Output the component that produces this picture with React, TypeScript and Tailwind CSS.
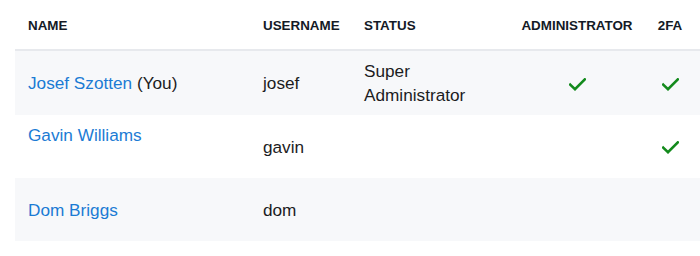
const users = [
  { name: 'Josef Szotten', you: true, username: 'josef', status: ['Super', 'Administrator'], admin: true, twoFactor: true },
  { name: 'Gavin Williams', you: false, username: 'gavin', status: [], admin: false, twoFactor: true, top: true },
  { name: 'Dom Briggs', you: false, username: 'dom', status: [], admin: false, twoFactor: false },
];

function Check() {
  return (
    <svg width="17" height="13" viewBox="0 0 17 13" className="inline-block align-middle">
      <path d="M1.2 6.6 L6 11.2 L15.8 1.4" fill="none" stroke="#138a1c" strokeWidth="2.6" strokeLinecap="square" />
    </svg>
  );
}

export default function App() {
  return (
    <div className="bg-white w-[700px] h-[256px] overflow-hidden pl-[15px]" style={{ fontFamily: '"Liberation Sans", Arial, Helvetica, sans-serif' }}>
      <table className="table-fixed border-collapse w-[685px] text-[17.2px] leading-[24px] text-[#1c1c1e]">
        <colgroup>
          <col className="w-[235px]" />
          <col className="w-[101px]" />
          <col className="w-[157px]" />
          <col className="w-[138px]" />
          <col className="w-[54px]" />
        </colgroup>
        <thead>
          <tr className="h-[50px] border-b-2 border-[#e7e9ed] text-[13.4px] font-bold uppercase text-[#141a26] leading-[16px]">
            <th className="text-left px-[13px] pt-[3px]">Name</th>
            <th className="text-left px-[13px] pt-[3px]">Username</th>
            <th className="text-left px-[13px] pt-[3px]">Status</th>
            <th className="text-center px-[10px] pt-[3px]">Administrator</th>
            <th className="text-center pl-0 pr-[6px] pt-[3px]">2FA</th>
          </tr>
        </thead>
        <tbody>
          {users.map((u, i) => (
            <tr key={u.username} className={`h-[63px] ${i % 2 === 0 ? 'bg-[#f7f8fa]' : 'bg-white'}`}>
              <td className={`px-[13px] py-2 ${u.top ? 'align-top' : 'align-middle'}`}>
                <span className="text-[#1b7bd4]">{u.name}</span>
                {u.you && <span> (You)</span>}
              </td>
              <td className="px-[13px] py-2 align-middle">{u.username}</td>
              <td className="px-[13px] py-2 align-middle">
                {u.status.map((line) => (
                  <div key={line}>{line}</div>
                ))}
              </td>
              <td className="px-[13px] py-2 align-middle text-center">{u.admin && <Check />}</td>
              <td className="pl-0 pr-[6px] py-2 align-middle text-center">{u.twoFactor && <Check />}</td>
            </tr>
          ))}
        </tbody>
      </table>
    </div>
  );
}
